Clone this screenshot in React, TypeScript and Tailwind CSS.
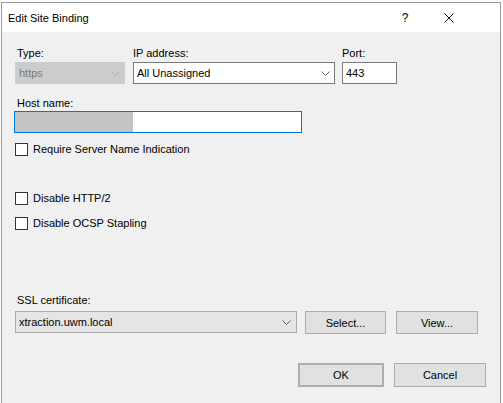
const font = "font-['Liberation_Sans',Arial,sans-serif]";

function Chevron({ color = '#606060' }: { color?: string }) {
  return (
    <svg width="9" height="5" viewBox="0 0 9 5" className="shrink-0">
      <path d="M0.5 0.5 L4.5 4.5 L8.5 0.5" fill="none" stroke={color} strokeWidth="1" />
    </svg>
  );
}

function Check({ label, className = '' }: { label: string; className?: string }) {
  return (
    <div className={`flex items-center h-[14px] ${className}`}>
      <span className="w-[13px] h-[13px] bg-white border border-[#333333] shrink-0" />
      <span className="ml-[5px] text-[11px] leading-[14px] text-black">{label}</span>
    </div>
  );
}

function Btn({ label, className = '' }: { label: string; className?: string }) {
  return (
    <div
      className={`flex items-center justify-center h-[23px] bg-[#e1e1e1] border border-[#adadad] text-[11px] text-black ${className}`}
    >
      {label}
    </div>
  );
}

export default function App() {
  return (
    <div className={`w-[503px] h-[403px] bg-white overflow-hidden ${font}`}>
      <div className="ml-[1px] mt-[2px] w-[500px] h-[420px] border border-[#9a9a9a] flex flex-col">
        {/* title bar */}
        <div className="h-[29px] bg-white flex items-center shrink-0">
          <span className="ml-[6px] text-[11px] leading-[14px] text-black">Edit Site Binding</span>
          <span className="ml-auto text-[12px] text-black w-[10px] text-center mr-[34px]">?</span>
          <svg width="10" height="10" viewBox="0 0 10 10" className="mr-[46px]">
            <path d="M0.5 0.5 L9.5 9.5 M9.5 0.5 L0.5 9.5" stroke="#111" strokeWidth="1" />
          </svg>
        </div>

        {/* body */}
        <div className="flex-1 bg-[#f0f0f0] pl-[13px] pt-[14px] text-[11px] leading-[14px] text-black">
          <div className="flex">
            <div className="w-[110px] mr-[8px]">
              <div className="pl-[2px] h-[14px]">Type:</div>
              <div className="mt-[2px] h-[22px] bg-[#cccccc] flex items-center pl-[4px] pr-[5px] text-[#7a7a7a]">
                <span>https</span>
                <span className="ml-auto"><Chevron color="#ababab" /></span>
              </div>
            </div>
            <div className="w-[202px] mr-[7px]">
              <div className="h-[14px]">IP address:</div>
              <div className="mt-[2px] h-[22px] bg-white border border-[#7a7a7a] flex items-center pl-[3px] pr-[4px]">
                <span>All Unassigned</span>
                <span className="ml-auto"><Chevron /></span>
              </div>
            </div>
            <div className="w-[55px]">
              <div className="h-[14px]">Port:</div>
              <div className="mt-[2px] h-[22px] bg-white border border-[#7a7a7a] flex items-center pl-[3px]">
                443
              </div>
            </div>
          </div>

          <div className="mt-[12px] pl-[2px] h-[14px]">Host name:</div>
          <div className="mt-[1px] -ml-[1px] w-[288px] h-[22px] bg-white border border-[#0078d7] flex">
            <div className="w-[118px] h-full bg-[#c4c4c4]" />
          </div>

          <Check label="Require Server Name Indication" className="mt-[9px]" />
          <Check label="Disable HTTP/2" className="mt-[35px]" />
          <Check label="Disable OCSP Stapling" className="mt-[11px]" />

          <div className="mt-[63px] pl-[2px] h-[14px]">SSL certificate:</div>
          <div className="mt-[4px] flex">
            <div className="w-[282px] h-[22px] bg-[#e5e5e5] border border-[#acacac] flex items-center pl-[3px] pr-[5px]">
              <span>xtraction.uwm.local</span>
              <span className="ml-auto"><Chevron /></span>
            </div>
            <Btn label="Select..." className="ml-[8px] w-[81px]" />
            <Btn label="View..." className="ml-[10px] w-[82px]" />
          </div>

          <div className="mt-[29px] flex">
            <Btn label="OK" className="ml-[283px] w-[86px] h-[24px] border-2 border-[#0078d7]" />
            <Btn label="Cancel" className="ml-[10px] w-[92px] h-[24px]" />
          </div>
        </div>
      </div>
    </div>
  );
}
